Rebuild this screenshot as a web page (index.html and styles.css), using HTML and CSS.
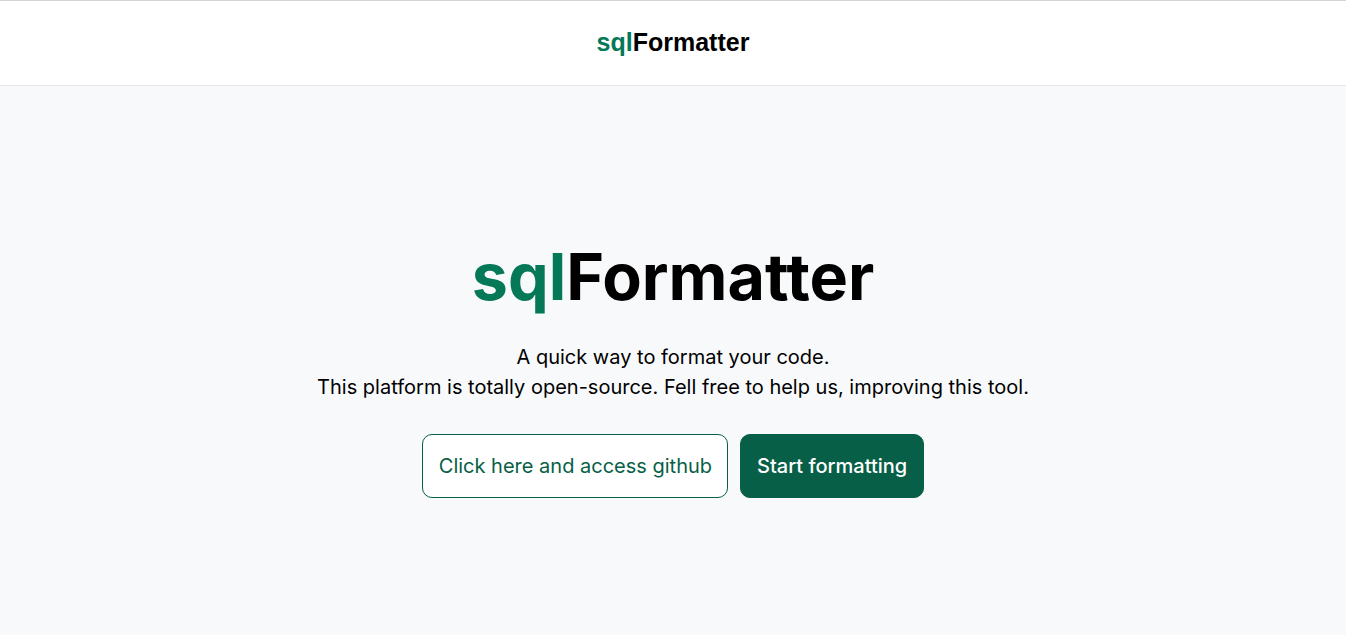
FILE: index.html
```html
<!DOCTYPE html>
<html lang="en">
<head>
<meta charset="utf-8">
<title>sqlFormatter</title>
<link rel="stylesheet" href="styles.css">
</head>
<body>
<header class="header">
  <div class="logo"><span class="green">sql</span>Formatter</div>
</header>
<main class="hero">
  <h1 class="title"><span class="green">sql</span>Formatter</h1>
  <p class="desc">A quick way to format your code.<br>This platform is totally open-source. Fell free to help us, improving this tool.</p>
  <div class="actions">
    <a class="btn btn-outline" href="#">Click here and access github</a>
    <a class="btn btn-solid" href="#">Start formatting</a>
  </div>
</main>
</body>
</html>
```
FILE: styles.css
```css
* { box-sizing: border-box; }
html, body { margin: 0; padding: 0; }
body {
  font-family: Inter, "Noto Sans", sans-serif;
  background: #f8f9fb;
  color: #000;
  min-height: 635px;
}
.header {
  height: 86px;
  background: #fff;
  border-top: 1px solid #d4d4d4;
  border-bottom: 1px solid #e5e7eb;
  display: flex;
  align-items: center;
  justify-content: center;
}
.logo {
  font-family: "Liberation Sans", Arial, sans-serif;
  font-weight: 700;
  font-size: 25px;
  line-height: 28px;
  margin-top: -2px;
  color: #000;
}
.green { color: #047857; }
.hero {
  display: flex;
  flex-direction: column;
  align-items: center;
  padding-top: 153px;
}
.title {
  margin: 0;
  font-size: 64.6px;
  font-weight: 700;
  line-height: 76px;
}
.desc {
  margin: 27px 0 0;
  text-align: center;
  font-size: 20px;
  line-height: 30px;
}
.actions {
  display: flex;
  gap: 12px;
  margin-top: 32px;
}
.btn {
  display: flex;
  align-items: center;
  height: 64px;
  padding: 0 16px;
  border-radius: 10px;
  font-size: 20px;
  text-decoration: none;
  border: 1px solid #065f46;
}
.btn-outline {
  color: #065f46;
  background: #fff;
  padding-right: 15px;
}
.btn-solid {
  background: #065f46;
  color: #fff;
  font-weight: 500;
}
```
